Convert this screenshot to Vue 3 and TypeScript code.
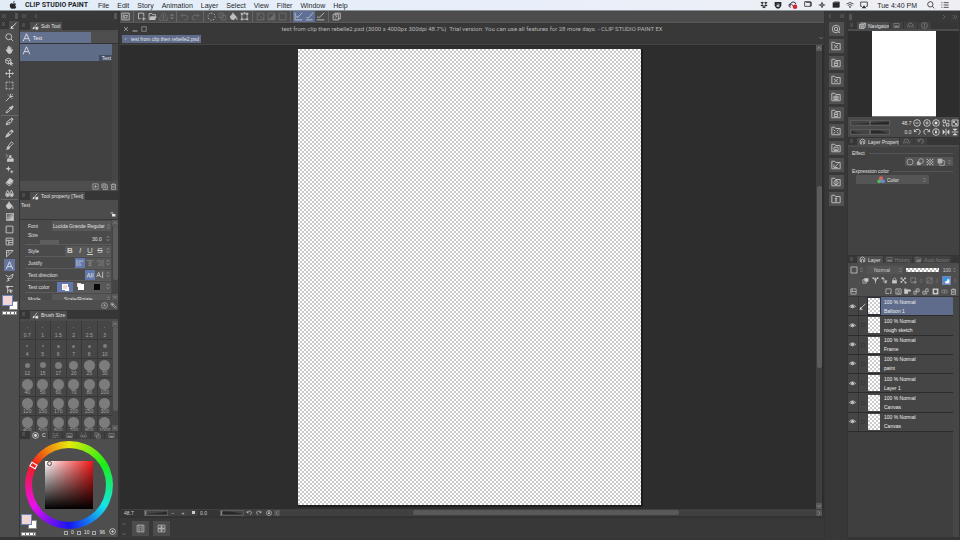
<script setup lang="ts">
import { h, ref } from 'vue'

interface Glyph { s?: string; f?: string }

const glyphs: Record<string, Glyph> = {
  search: { s: 'M9 5a4 4 0 1 1-8 0a4 4 0 1 1 8 0M8 8l3 3' },
  hand: { f: 'M3 6V3q.6-1 1 0v2l.3-3.500q.7-1 1 0V5l.5-3.500q.7-.8 1 0V5l.7-2.500q.8-.5.9.5L8.800 7l1-1.300q1-.5 1 .3L9 10l-1.500 1.500h-3L2.500 9 .8 6.500Q1 5.500 2 6z' },
  object: { s: 'M1 3.500 4.500 1.500 8 3.500v4L4.500 9.500 1 7.500zM1 3.500l3.500 2 3.500-2M4.500 5.500v4', f: 'M6.500 5.500l5 3.500-2.200.4 1 2-1 .5-1-2-1.500 1.300z' },
  move: { s: 'M6 2v8M2 6h8', f: 'M6 0l2 2.500H4zM6 12l2-2.500H4zM0 6l2.500-2v4zM12 6 9.500 4v4z' },
  marquee: { s: 'M1.500 3.500v-2h2M5 1.500h2M8.500 1.500h2v2M10.500 5v2M10.500 8.500v2h-2M7 10.500H5M3.500 10.500h-2v-2M1.500 7V5' },
  wand: { s: 'M1 11l5-5M7.500 1v2M11 4.500H9M4 2l1.300 1.300M10.500 1.500 9.500 2.500M9.500 8 9 7', f: 'M7.500 2.800l2 1.700-2 2-2-2z' },
  dropper: { s: 'M1.500 10.500 2.500 8 6 4.500 7.500 6 4 9.500z', f: 'M10 .6q1.800.4 1.300 1.900L9.500 5l.4.700-1 .9L5.300 3.300l1-1 .8.3z' },
  pen: { s: 'M1.500 10.500 3 6l4-3 2.500 2.500-3 3.500zM2 10l3-3', f: 'M7.500 2 9 .6l2.500 2.600L10 4.700zM5 6h1.500v1.500H5z' },
  pencil: { s: 'M1 11 3 6.500 7 3l2 2L5.500 9z', f: 'M7 2l2-1.500L11.500 3 10 5zM1 11l1.500-4.500L5.500 9zM5 5l2 2-1.500 1.500L3.500 6.500z' },
  brush: { s: 'M4.500 6.500 8.500 1 11 3.200 6.500 8z', f: 'M4 6.500 7 9q-1 3-6 2.500Q3 10 2.500 8z' },
  airbrush: { s: 'M5.500 6h3l2.500 2H3.500z', f: 'M3 8h8.500v3.500H2.500zM5.500 3h3v2.500h-3zM1 1.500h1.200v1.200H1zM1 4.500h1.200v1.200H1zM3 3h1.200v1.200H3z' },
  sparkle: { s: 'M9 7v4M7 9h4', f: 'M4.500 1l1 3 3 1-3 1-1 3-1-3-3-1 3-1z' },
  eraser: { s: 'M1 8l3 3h3l4-4.500', f: 'M1 7.500 6.500 1l5 3.500L6.500 10z' },
  blend: { s: 'M3.500 1.500Q6.500 6 5.500 9q-2 2.500-4.500 0Q.5 6 3.500 1.500zM8.500 1.500Q11.500 6 11 9q-2 2.500-4.500 0Q5.500 6 8.500 1.500z', f: 'M1.500 5.500h3.500v4H2zM7 5.500h3.500v4H7.500z' },
  bucket: { s: 'M4 4.500q0-4 2.500-3', f: 'M1 5.500 6 2l4.500 4.500L6 11 2.500 9.500zM10.500 6.500q1.500 3 .5 4-1.500.5-1.300-2z' },
  square: { s: 'M1.500 1.500h9v9h-9z' },
  frame: { s: 'M1.500 1.500h9v9h-9zM1.500 4.500h9M5 4.500v6M5 7.500h5.500' },
  ruler: { s: 'M2 10.500V2h9zM4 6V4h2' },
  letter: { s: 'M1.500 11 6 1l4.500 10M3.500 7.500h5' },
  balloon: { s: 'M1 2.500 4.500 5.500 11 1.500 9 7 3 7.500 6 9.500 2 11' },
  correct: { s: 'M1 2h10M3.500 2v9M3.500 6 9 10.500', f: 'M6 5l5 3-2.500.5L7 11zM2 1h3v2.500H2z' },
  clip: { s: 'M1 1.500h10v9H1zM9 4.500H6.500a1.800 1.800 0 1 0 0 3.500H8V4.500M4 3Q2 6 4 9' },
  newdoc: { s: 'M2 9V1.500h7V6M2 9h3M9 6.500v5M6.500 9h5' },
  open: { s: 'M1.500 10V2h3.500l1 1.500h4V5', f: 'M1.500 10.500 3.500 5.500h8l-2 5z' },
  save: { s: 'M1 7v4h10V7M2.500 7q0-5 3.500-5.500Q9.500 2 9.500 7M6 4v5M4.500 7.500 6 9l1.500-1.500' },
  undo: { s: 'M4 2 1.500 4.500 4 7M1.500 4.500H8q2.500.5 2.500 3T8 10.500H6' },
  redo: { s: 'M8 2l2.500 2.500L8 7M10.500 4.500H4Q1.500 5 1.500 7.500T4 10.500h2' },
  dashed: { s: 'M5 1.500h2M9 2.500l1.200 1.400M10.700 6v1.500M9.500 9.500 8 10.600M6 10.800H4.500M2.700 9.500 1.700 8M1.400 6V4.800M2.300 3 3.500 2' },
  copy: { s: 'M1.500 1.500h6v6h-6zM4.500 4.500h6v6h-6z' },
  transform: { s: 'M2.500 2.500h7v7h-7z', f: 'M1 1h2.500v2.500H1zM8.500 1H11v2.500H8.500zM1 8.500h2.500V11H1zM8.500 8.500H11V11H8.500zM5 0h2v2H5z' },
  diag: { s: 'M1.500 1.500h9v9h-9zM1.500 1.500l9 9' },
  halfdiag: { s: 'M1.500 1.500h9v9h-9z', f: 'M10.500 1.500v9h-9z' },
  snapA: { s: 'M1.500 1v9.500H11M4 8 11 1M3 5l2 3' },
  snapB: { s: 'M1 10.500h9M2 7q2 3 4.500-1T11 1' },
  snapC: { s: 'M1 10.500h10M4 7.500 11 1M3 8l-1-2' },
  help: { s: 'M1.500 3h7v7.500h-7zM4 3V1.500h7V9H8.500M3.500 5.500q1.500-1.500 3 0 0 .8-1.500 1.500v.5M5 8.500v1' },
  trash: { s: 'M1.500 3h9M4.500 3V1.500h3V3M2.500 3v8h7V3M5 5v4M7 5v4' },
  addbox: { s: 'M1.500 1.500h9v9h-9zM6 3.500v5M3.500 6h5' },
  dup: { s: 'M1.500 8.500v-7h7v2M3.500 3.500h7.500V11H3.500zM7.200 5v4.500M5 7.200h4.500' },
  lock: { s: 'M2 6V3.500q1-3 4 0V6', f: 'M4 6h7v5H4z' },
  closedlock: { s: 'M3.500 6V3.500q2.500-4 5 0V6', f: 'M2 5.500h8V11H2z' },
  clock: { s: 'M11 6a5 5 0 1 1-10 0a5 5 0 1 1 10 0M6 3v4M4 5.500 6 7.500l2-2' },
  wrench: { s: 'M4 5.500 9.500 11 11 9.500 6.500 4M1.500 2.500q2-2 4.500 0 1 3-2 4-3-1-2.500-4', f: 'M3 3h2v2H3z' },
  pal: { s: 'M11 6a5 5 0 1 1-10 0a5 5 0 1 1 10 0', f: 'M8.500 6a2.500 2.500 0 1 1-5 0a2.500 2.500 0 1 1 5 0' },
  lines: { s: 'M1 3h4M7 3h4M1 6h2M5 6h6M1 9h6M9 9h2' },
  drop3: { s: 'M3 5a2 2 0 1 0 .1 0M9 5a2 2 0 1 0 .1 0M3 1v2M9 1v2M4 8h4' },
  photo: { s: 'M1.500 2.500h9v7h-9z', f: 'M2 9l3-4 2 2 1.500-1.500L10 9z' },
  quick: { s: 'M10.500 6A4.500 4.500 0 1 1 6 1.500 4.500 4.500 0 0 1 10.500 6M8 6a2 2 0 1 1-4 0 2 2 0 1 1 4 0M7 7l4 4' },
  folderX: { s: 'M1 10.500v-9h3.500l1 1.500H11v7.500zM3.500 4.500l5 4.500M8.500 4.500l-5 4.500' },
  folderDoc: { s: 'M1 10.500v-9h3.500l1 1.500H11v7.500zM4 4.500h4V9H4zM4 6.500h4' },
  folderGrid: { s: 'M1 10.500v-9h3.500l1 1.500H11v7.500zM3.500 5h5v4h-5zM6 5v4M3.500 7h5' },
  folderPen: { s: 'M1 10.500v-9h3.500l1 1.500H11v7.500zM3.500 5.500V9H8M5 8l4-4' },
  folderArr: { s: 'M1 10.500v-9h3.500l1 1.500H11v7.500zM3 4.500l2 1.500M9 4.500 7 6M3 9l2-1.500M9 9 7 7.500' },
  folderPic: { s: 'M1 10.500v-9h3.500l1 1.500H11v7.500zM3.500 5h5v4h-5z', f: 'M4 9l1.500-2.500L8 9z' },
  folderBall: { s: 'M1 10.500v-9h3.500l1 1.500H11v7.500zM8.500 6.700a2.500 2.500 0 1 1-5 0a2.500 2.500 0 1 1 5 0M6 5v3.500' },
  folderUp: { s: 'M1 10.500v-9h3.500l1 1.500H11v7.500z', f: 'M6 4l2 2H6.800v3.500H5.200V6H4z' },
  stack: { s: 'M1 4.500 4 2h7v6L8.500 11H1zM1 4.500h7.500V11M8.500 4.500 11 2M3 6.500h3.500v2.500H3z' },
  cube: { s: 'M2 4l4-2.500L10 4v5l-2 1.500V6.500L6 5.500l-2 1V11L2 9z' },
  arcs: { s: 'M1.500 9.500V6q1.500-5 4.500-4.500T10.500 6v3.500M4 9V7.500q2-2.500 4 0V9' },
  info: { s: 'M11 6a5 5 0 1 1-10 0a5 5 0 1 1 10 0M6 3v6' },
  minus: { s: 'M11 6a5 5 0 1 1-10 0a5 5 0 1 1 10 0M3.500 6h5' },
  plus: { s: 'M11 6a5 5 0 1 1-10 0a5 5 0 1 1 10 0M3.500 6h5M6 3.500v5' },
  full: { s: 'M11 6a5 5 0 1 1-10 0a5 5 0 1 1 10 0', f: 'M4 4h4v4H4z' },
  fit: { s: 'M1.500 1.500h4v4h-4zM6.500 6.500h4v4h-4zM5.500 5.500l1 1M8 2h2.500v2.500M2 8v2.500h2.500' },
  fitdiag: { s: 'M1.500 1.500h9v9h-9zM3.500 3.500l5 5M3.500 6V3.500H6M8.500 6v2.500H6' },
  rotl: { s: 'M2 2v3.500h3.500M2 5.500Q4 1 8 2t2.500 5L8 10' },
  rotr: { s: 'M10 2v3.500H6.500M10 5.500Q8 1 4 2T1.500 7L4 10' },
  rot0: { s: 'M11 6a5 5 0 1 1-10 0a5 5 0 1 1 10 0M6 2v4', f: 'M4.500 5h3v3h-3z' },
  fliph: { s: 'M6 1v10', f: 'M1 2l3.500 4L1 10zM11 2 7.500 6 11 10z' },
  flipv: { s: 'M1 6h10', f: 'M2 1h8L6 4.500zM2 11h8L6 7.500z' },
  circle: { s: 'M10.500 6a4.500 4.500 0 1 1-9 0a4.500 4.500 0 1 1 9 0' },
  tone: { s: 'M11 4.500a3.500 3.500 0 1 1-7 0a3.500 3.500 0 1 1 7 0', f: 'M1 8q0-3 3-3.500 0 3.500 4 4Q7 11 4 11T1 8z' },
  dots: { f: 'M1 1h2v2H1zM5 1h2v2H5zM9 1h2v2H9zM3 3h2v2H3zM7 3h2v2H7zM1 5h2v2H1zM5 5h2v2H5zM9 5h2v2H9zM3 7h2v2H3zM7 7h2v2H7zM1 9h2v2H1zM5 9h2v2H5zM9 9h2v2H9z' },
  layercol: { s: 'M4 4h7v7H4z', f: 'M1 1h7v7H1z' },
  clipmask: { s: 'M1.500 4.500h6v6h-6z', f: 'M4 2h7v6H4z' },
  ref: { s: 'M1 2h10M6 2v9', f: 'M3 4h6L6 8zM1 1h2.500v2.500H1zM8.500 1H11v2.500H8.500z' },
  draft: { s: 'M2 2q5 0 3 4t5 4', f: 'M1 1h4v3H1zM6 6h5l-3 5z' },
  lockdots: { s: 'M2 2l8 8', f: 'M1 1h3v3H1zM7 1h3v3H7zM4 4h3v3H4zM1 7h3v3H1zM8 8h3v3H8z' },
  maskruler: { s: 'M1.500 1.500h8v8h-8z', f: 'M6 7h5v4H6z' },
  rulerx: { s: 'M1.500 1.500h9v9h-9zM1.500 10.500l9-9' },
  panes: { s: 'M1.500 1.500h9v9h-9zM1.500 6h9M4 1.500V6' },
  newlayer: { s: 'M7 9.500H1.500v-8h9V7', f: 'M8 8h1.500V6.800h1V8H12v1.200h-1.500v1.500h-1V9.200H8z' },
  newvec: { s: 'M1.500 1.500h9v9h-9zM6 6a2 2 0 1 0 .1 0M4 3l4 2' },
  newfold: { s: 'M11 6V3H5.500l-1-1.500H1V9.500h6', f: 'M1 2h3l1 1.500h6V6H7v3.500H1z' },
  transfer: { s: 'M5.500 1.500h5v5h-5zM1.500 5.500h4v5h-4zM5 7l3-3' },
  merge: { s: 'M6.500 1.500h4v5h-4zM1.500 5.500h4v5h-4zM8 8v2.500H6.500' },
  mask: { f: 'M1 1h10v10H1zM6 3.200a2.800 2.800 0 1 0 .01 0z' },
  applymask: { s: 'M1.500 3.500h5v5h-5zM5.500 3.500h5v5h-5z' },
  eye: { s: 'M.5 6q5.500-6 11 0-5.500 5-11 0z', f: 'M8.500 5.800a2.500 2.500 0 1 1-5 0a2.500 2.500 0 1 1 5 0' },
  pennib: { s: 'M2 10 11 1.500M1 11h5', f: 'M1 10.500 3 7l2 2z' },
  subtool: { s: 'M2 10 9 1M6 10.500h4V6', f: 'M1 11l1-4.500L5 9zM6 7h4v3.500H6z' },
  film: { s: 'M1.500 1.500h9v9h-9zM4 1.500v9M8 1.500v9M5.500 4.500h1M5.500 7.500h1' },
  mesh: { s: 'M1.500 1.500h9v9h-9zM6 1.500v9M1.500 6h9M8.500 6a2.500 2.500 0 1 1-5 0a2.500 2.500 0 1 1 5 0' },
  jl: { s: 'M1.500 1v10M3.500 3H11M3.500 6H7M3.500 9h5' },
  jc: { s: 'M1 2.500h10M3 6h6M6 2.500V11M3 9.500h6' },
  jr: { s: 'M10.500 1v10M1 3h7.500M5 6h3.500M3 9h5.500' },
  horiz: { s: 'M1.500 10 4 3l2.500 7M2.500 7.500H6M8 3v7M10.500 3v7' },
  vert: { s: 'M1 9l3-7 3 7M2 7h4M10 1v9M8.500 8.500 10 10.500' },
  spin: { s: 'M3.500 4.500 6 1.500 8.500 4.500M3.500 7.500 6 10.500 8.500 7.500' },
  up: { s: 'M2.500 8 6 4l3.500 4' },
  down: { s: 'M2.500 4 6 8l3.500-4' },
  left: { s: 'M8 2 4 6l4 4' },
  right: { s: 'M4 2l4 4-4 4' },
  dleft: { s: 'M6 2 2 6l4 4M10.500 2l-4 4 4 4' },
  dright: { s: 'M6 2l4 4-4 4M1.500 2l4 4-4 4' },
  dropbox: { f: 'M3.300 1 6 2.800 3.300 4.600.6 2.800zM8.700 1l2.700 1.800-2.700 1.800L6 2.800zM3.300 4.800 6 6.600 3.300 8.400.6 6.600zM8.700 4.800l2.700 1.800-2.700 1.800L6 6.600zM6 7.400l2.700 1.800L6 11 3.300 9.200z' },
  shield: { f: 'M1 1.500h10V7q-1.500 4-5 4.500Q2.500 11 1 7zM4 4v1h3v1H4v2.500h4v-1H5.200V7H8V4z' },
  display: { s: 'M3 2h8v5.500H9M1 1h8.500v7H1z' },
  diamond: { s: 'M1 6h10M4 6l2-4 2 4-2 4z' },
  card: { f: 'M1 2h9.500v8H1z', s: 'M3 1.500h8v8' },
  wifi: { s: 'M.8 4.500q5.200-4.500 10.400 0M2.700 6.700q3.300-2.800 6.600 0', f: 'M4.200 8.500Q6 7 7.800 8.500L6 10.500z' },
  airplay: { s: 'M3 8H1V1.500h10V8H9', f: 'M6 6.500 9.500 11h-7z' },
  list: { s: 'M4 2.500h7.500M4 6h7.500M4 9.500h7.500M.5 2.500H2M.5 6H2M.5 9.500H2' },
  apple: { f: 'M8.400 3.200c1 0 1.700.5 2.200 1.200-1.800 1.200-1.500 3.600.4 4.400-.6 1.600-1.500 3-2.600 3-.8 0-1.200-.4-2.100-.4s-1.300.4-2 .4C2.800 11.800 1.200 9.200 1.200 6.800c0-2.400 1.400-3.600 2.800-3.600.9 0 1.600.5 2.200.5s1.300-.5 2.200-.5zM6.200 3c0-1.600 1-2.700 2.300-2.900.1 1.600-1 2.800-2.300 2.900z' },
}

const Ico = (p: { n: string }) =>
  h('svg', { viewBox: '0 0 12 12', 'aria-hidden': 'true' }, [
    glyphs[p.n].f ? h('path', { d: glyphs[p.n].f, fill: 'currentColor', 'fill-rule': 'evenodd' }) : null,
    glyphs[p.n].s ? h('path', { d: glyphs[p.n].s, fill: 'none', stroke: 'currentColor', 'stroke-width': 1.2 }) : null,
  ])

const menus = ['File', 'Edit', 'Story', 'Animation', 'Layer', 'Select', 'View', 'Filter', 'Window', 'Help']
const toolGroups = [
  ['search', 'hand', 'object', 'move', 'marquee', 'wand', 'dropper'],
  ['pen', 'pencil', 'brush', 'airbrush', 'sparkle', 'eraser', 'blend'],
  ['bucket', 'gradient', 'square', 'frame', 'ruler', 'letter', 'balloon', 'correct'],
]
const activeTool = ref('letter')

const commands: { n: string; cls?: string }[][] = [
  [{ n: 'clip' }],
  [{ n: 'newdoc' }, { n: 'open' }, { n: 'save', cls: 'dim' }, { n: 'spin', cls: 'slim' }],
  [{ n: 'undo', cls: 'dim' }, { n: 'redo', cls: 'dim' }],
  [{ n: 'dashed' }, { n: 'copy', cls: 'dim' }, { n: 'bucket' }, { n: 'transform' }],
  [{ n: 'diag', cls: 'dim' }, { n: 'halfdiag', cls: 'dim' }, { n: 'square', cls: 'dim' }],
  [{ n: 'snapA', cls: 'on' }, { n: 'snapB', cls: 'on' }, { n: 'snapC' }],
  [{ n: 'help' }],
]

const sizes = ['0.7', '1', '1.5', '2', '2.5', '3', '4', '5', '6', '7', '8', '10', '12', '15', '17', '20', '25', '30',
  '40', '50', '60', '70', '80', '100', '120', '150', '170', '200', '250', '300', '400', '500', '600', '700', '800', '1000']
const dot = (s: string) => Math.min(11, Math.max(1, Math.round(Number(s) * 0.43)))

const dock = ['quick', 'folderX', 'folderDoc', 'folderX', 'folderGrid', 'folderDoc', 'folderArr', 'folderPic', 'folderPen', 'folderBall', 'folderUp']
const layers = ['Balloon 1', 'rough sketch', 'Frame', 'paint', 'Layer 1', 'Canvas', 'Canvas']
const activeLayer = ref(0)
const font = ref('Lucida Grande Regular')
const size = ref('30.0')
const expression = ref('Color')
const blend = ref('Normal')
</script>

<template>
  <div class="app">
    <header class="menubar">
      <Ico n="apple" class="apple" />
      <nav class="menus">
        <button class="brand">CLIP STUDIO PAINT</button>
        <button v-for="m in menus" :key="m">{{ m }}</button>
      </nav>
      <div class="tray">
        <Ico n="dropbox" /><Ico n="shield" />
        <svg viewBox="0 0 14 12" class="cloud" aria-hidden="true">
          <path d="M3.500 9.500q-3-.5-2.500-3.500.5-2 2.500-2 1-2.500 4-2.500 3.500 0 4 3.500" fill="none" stroke="currentColor" stroke-width="1.400" />
          <path d="M4 7.500a1.500 1.500 0 1 1 1.500-2L8 8" fill="none" stroke="currentColor" stroke-width="1.200" />
          <circle cx="10" cy="8.500" r="3.400" fill="#d8232f" />
        </svg>
        <Ico n="display" /><Ico n="diamond" /><Ico n="card" /><Ico n="wifi" /><Ico n="airplay" />
        <time>Tue 4:40 PM</time>
        <Ico n="search" /><Ico n="list" />
      </div>
    </header>

    <main class="workspace">
      <section class="toolcol" aria-label="Tools">
        <div class="strip"><Ico n="dleft" /><i class="grip"></i></div>
        <div class="tabs"><i class="handle"></i><button class="tab on" aria-label="Tool"><Ico n="pennib" /></button></div>
        <div class="tools">
          <div v-for="(g, gi) in toolGroups" :key="gi" class="toolgroup">
            <button v-for="t in g" :key="t" :aria-label="t" :class="{ active: t === activeTool }" @click="activeTool = t">
              <i v-if="t === 'gradient'" class="grad"></i>
              <Ico v-else :n="t" />
            </button>
          </div>
          <div class="swatches"><button class="fg" aria-label="Main color"></button><button class="bg" aria-label="Sub color"></button></div>
          <button class="clear" aria-label="Transparent"></button>
        </div>
      </section>

      <section class="leftcol">
        <div class="strip"><Ico n="dleft" /><Ico n="left" class="second" /><i class="grip"></i></div>

        <div class="tabs"><i class="handle"></i><button class="tab on"><Ico n="subtool" />Sub Tool</button></div>
        <div class="group"><button><Ico n="letter" />Text</button></div>
        <div class="sublist">
          <button class="subitem"><Ico n="letter" /><span>Text</span></button>
          <i class="gutter"></i>
        </div>
        <div class="foot">
          <button aria-label="Import"><Ico n="addbox" /></button>
          <button aria-label="Duplicate"><Ico n="dup" /></button>
          <button aria-label="Delete"><Ico n="trash" /></button>
        </div>

        <div class="tabs"><i class="handle"></i><button class="tab on"><Ico n="subtool" />Tool property [Text]</button></div>
        <div class="prophead"><span>Text</span><button aria-label="Lock"><Ico n="lock" /></button></div>
        <div class="props">
          <div class="rows">
            <div class="row">
              <label for="font">Font</label>
              <div class="box"><select id="font" v-model="font"><option>Lucida Grande Regular</option></select><Ico n="spin" class="narrow" /></div>
            </div>
            <div class="row size">
              <label for="size">Size</label><i class="meter"></i>
              <input id="size" v-model="size" /><Ico n="spin" />
            </div>
            <div class="row">
              <span>Style</span>
              <div class="box styles">
                <button><b>B</b></button><button><em>I</em></button><button><u>U</u></button><button><s>S</s></button><Ico n="spin" />
              </div>
            </div>
            <div class="row">
              <span>Justify</span>
              <div class="box">
                <button class="on" aria-label="Left"><Ico n="jl" /></button><button class="dim" aria-label="Center"><Ico n="jc" /></button><button class="dim" aria-label="Right"><Ico n="jr" /></button><Ico n="spin" />
              </div>
            </div>
            <div class="row">
              <span>Text direction</span>
              <div class="box">
                <button class="on" aria-label="Horizontal"><Ico n="horiz" /></button><button aria-label="Vertical"><Ico n="vert" /></button><Ico n="spin" />
              </div>
            </div>
            <div class="row">
              <span>Text color</span>
              <div class="box colors">
                <button class="on" aria-label="Main color"><i class="chip pink"></i></button>
                <button aria-label="Sub color"><i class="chip white"></i></button>
                <button aria-label="User color"><i class="chip black"></i></button>
                <Ico n="spin" />
              </div>
            </div>
            <div class="row">
              <label for="mode">Mode</label>
              <div class="box mode"><select id="mode"><option>Scale/Rotate</option></select><Ico n="spin" class="narrow" /></div>
            </div>
          </div>
          <div class="scroll"><Ico n="up" /><i class="thumb long"></i><Ico n="down" /></div>
        </div>
        <div class="foot low">
          <button aria-label="Reset"><Ico n="clock" /></button>
          <button aria-label="Settings"><Ico n="wrench" /></button>
        </div>

        <div class="tabs"><i class="handle"></i><button class="tab on"><Ico n="subtool" />Brush Size</button></div>
        <div class="brushes">
          <div class="grid">
            <button v-for="s in sizes" :key="s">
              <span class="dotbox"><i :style="{ width: dot(s) + 'px', height: dot(s) + 'px' }"></i></span>
              <span class="num">{{ s }}</span>
            </button>
          </div>
          <div class="scroll"><Ico n="up" /><i class="thumb long"></i><Ico n="down" /></div>
        </div>

        <div class="tabs colortabs">
          <i class="handle"></i>
          <button class="tab on"><Ico n="pal" />C</button>
          <button class="tab" aria-label="Slider"><Ico n="lines" /></button>
          <button class="tab" aria-label="Color set"><Ico n="photo" /></button>
          <button class="tab" aria-label="Mixing"><Ico n="drop3" /></button>
          <button class="tab" aria-label="Approximate"><Ico n="copy" /></button>
          <button class="tab" aria-label="History"><Ico n="photo" /></button>
        </div>
        <div class="color">
          <div class="wheel"><div class="hole"><div class="sv"><i class="pick"></i></div></div><i class="hue"></i></div>
          <div class="colorfoot">
            <div class="mini">
              <div class="swatches"><button class="fg" aria-label="Main color"></button><button class="bg" aria-label="Sub color"></button></div>
              <button class="clear" aria-label="Transparent"></button>
            </div>
            <div class="hsv"><i></i><span>0</span><i></i><span>10</span><i></i><span>96</span></div>
            <button class="hls" aria-label="Color space"><Ico n="plus" /></button>
          </div>
        </div>
      </section>

      <section class="center">
        <div class="commands">
          <div v-for="(g, gi) in commands" :key="gi" class="cmdgroup">
            <button v-for="c in g" :key="c.n" :class="c.cls" :aria-label="c.n"><Ico :n="c.n" /></button>
          </div>
        </div>
        <div class="titlebar">
          <div class="winbtns">
            <button aria-label="Close"><svg viewBox="0 0 12 12"><path d="M2 2l8 8M10 2l-8 8" fill="none" stroke="currentColor" stroke-width="1.500" /></svg></button>
            <button aria-label="Minimize"><svg viewBox="0 0 12 12"><path d="M1 10h10" stroke="currentColor" stroke-width="2" /></svg></button>
            <button aria-label="Zoom"><Ico n="square" /></button>
          </div>
          <h1>test from clip then rebelle2.psd (3000 x 4000px 300dpi 48.7%)&nbsp; Trial version: You can use all features for 28 more days. - CLIP STUDIO PAINT EX</h1>
        </div>
        <div class="doctabs"><button><i>×</i>test from clip then rebelle2.psd</button><Ico n="down" /></div>
        <div class="stage">
          <div class="view"><div class="page"></div></div>
          <div class="scroll vs"><Ico n="up" /><i class="thumb"></i><Ico n="down" /></div>
        </div>
        <div class="status">
          <span class="val">48.7</span>
          <svg class="ramp" viewBox="0 0 36 6" preserveAspectRatio="none"><path d="M0 5 36 1v4z" fill="#282828" /><path d="M1 0v6" stroke="#8a8a8a" stroke-width="2" /></svg>
          <button aria-label="Zoom out">−</button><button aria-label="Zoom in">+</button><button aria-label="Fit"><i class="fitdot"></i></button>
          <span class="val">0.0</span>
          <svg class="ramp" viewBox="0 0 36 6" preserveAspectRatio="none"><path d="M1 5V1q22-1 34 4z" fill="#282828" /><path d="M1 0v6" stroke="#8a8a8a" stroke-width="2" /></svg>
          <button aria-label="Rotate left"><Ico n="rotl" /></button><button aria-label="Rotate right"><Ico n="rotr" /></button><button aria-label="Reset rotation"><Ico n="rot0" /></button>
          <Ico n="left" class="arrow" />
          <div class="hs"><i></i></div>
          <Ico n="right" class="arrow" />
        </div>
        <div class="bottom">
          <div class="updown"><Ico n="up" /><Ico n="down" /></div>
          <button aria-label="Timeline"><Ico n="film" /></button>
          <button aria-label="Mesh"><Ico n="mesh" /></button>
        </div>
      </section>

      <section class="dock">
        <div class="strip"><Ico n="left" /><Ico n="dright" class="second" /></div>
        <div class="docklist">
          <button v-for="(d, i) in dock" :key="i" :aria-label="'Material ' + (i + 1)"><Ico :n="d" /></button>
        </div>
      </section>

      <section class="rightcol">
        <div class="strip"><i class="grip"></i><Ico n="right" class="end" /><Ico n="dright" /></div>

        <div class="tabs">
          <i class="handle"></i><button class="tab on cut"><Ico n="stack" />Navigator</button>
          <button class="tab" aria-label="Sub view"><Ico n="photo" /></button>
          <button class="tab" aria-label="Item bank"><Ico n="arcs" /></button>
          <button class="tab" aria-label="Information"><Ico n="info" /></button>
        </div>
        <div class="navview"><div class="navpage"></div></div>
        <div class="navctl">
          <div class="navrow">
            <svg class="ramp" viewBox="0 0 40 6" preserveAspectRatio="none"><path d="M0 5 40 1v4z" fill="#282828" /><path d="M20 0v6" stroke="#8a8a8a" /></svg>
            <span>48.7</span>
            <button aria-label="Zoom out"><Ico n="minus" /></button><button aria-label="Zoom in"><Ico n="plus" /></button><button aria-label="Full size"><Ico n="full" /></button><button aria-label="Fit"><Ico n="fit" /></button><button aria-label="Fit to view"><Ico n="fitdiag" /></button>
          </div>
          <div class="navrow">
            <svg class="ramp" viewBox="0 0 40 6" preserveAspectRatio="none"><path d="M1 1Q5 5 19 5H1zM21 5V1h9l9 4z" fill="#282828" /><path d="M20 0v6" stroke="#8a8a8a" /></svg>
            <span>0.0</span>
            <button aria-label="Rotate left"><Ico n="rotl" /></button><button aria-label="Rotate right"><Ico n="rotr" /></button><button aria-label="Reset"><Ico n="rot0" /></button><button aria-label="Flip horizontal"><Ico n="fliph" /></button><button aria-label="Flip vertical"><Ico n="flipv" /></button>
          </div>
        </div>

        <div class="tabs gap">
          <i class="handle"></i><button class="tab on cut wide"><Ico n="cube" />Layer Property</button>
          <button class="tab" aria-label="Search layer"><Ico n="arcs" /></button>
          <button class="tab" aria-label="History"><Ico n="rotl" /></button>
        </div>
        <div class="layerprop">
          <div class="legend">Effect</div>
          <div class="effects">
            <button aria-label="Border"><Ico n="circle" /></button><button aria-label="Extract line"><Ico n="tone" /></button><button aria-label="Tone"><Ico n="dots" /></button><button aria-label="Layer color"><Ico n="layercol" /></button><Ico n="spin" class="thin" />
          </div>
          <label class="legend" for="expr">Expression color</label>
          <div class="expr">
            <svg viewBox="0 0 12 12" aria-hidden="true"><circle cx="6" cy="3.500" r="3" fill="#d9605c" /><circle cx="3.300" cy="8" r="3" fill="#54b861" /><circle cx="8.700" cy="8" r="3" fill="#6d87d8" /></svg>
            <select id="expr" v-model="expression"><option>Color</option></select>
            <Ico n="spin" class="thin" />
          </div>
        </div>

        <div class="tabs gap">
          <i class="handle"></i><button class="tab on"><Ico n="cube" />Layer</button>
          <button class="tab faint"><Ico n="photo" />History</button>
          <button class="tab faint"><Ico n="open" />Auto Action</button>
        </div>
        <div class="layerbar">
          <button class="palette" aria-label="Palette color"><Ico n="square" /></button><Ico n="spin" class="thin" />
          <div class="blendbox"><select v-model="blend" aria-label="Blending mode"><option>Normal</option></select><Ico n="spin" class="thin" /></div>
          <i class="opacity"></i><span>100</span><Ico n="spin" class="thin" />
        </div>
        <div class="layerbar icons">
          <button aria-label="Clip"><Ico n="clipmask" /></button><button aria-label="Reference"><Ico n="ref" /></button><button aria-label="Draft"><Ico n="draft" /></button><button aria-label="Lock"><Ico n="closedlock" /></button><button aria-label="Lock pixels"><Ico n="lockdots" /></button>
          <button class="dim" aria-label="Mask"><Ico n="maskruler" /></button><Ico n="spin" class="thin" /><button class="dim" aria-label="Ruler"><Ico n="rulerx" /></button><Ico n="spin" class="thin" />
          <button class="lc" aria-label="Layer color"><svg viewBox="0 0 12 12"><path d="M4 4h7v7H4z" fill="#fff" /><path d="M1 1h6v6H1z" fill="#1e9bf0" /></svg></button><Ico n="spin" class="thin" />
        </div>
        <div class="layerbar make">
          <button class="first" aria-label="Panes"><Ico n="panes" /></button>
          <button aria-label="New raster layer"><Ico n="newlayer" /></button><button aria-label="New vector layer"><Ico n="newvec" /></button><button aria-label="New folder"><Ico n="newfold" /></button><button aria-label="Transfer"><Ico n="transfer" /></button><button aria-label="Merge"><Ico n="merge" /></button><button aria-label="Create mask"><Ico n="mask" /></button><button class="dim" aria-label="Apply mask"><Ico n="applymask" /></button><button aria-label="Delete"><Ico n="trash" /></button>
        </div>
        <div class="layers">
          <ul>
            <li v-for="(l, i) in layers" :key="i" :class="{ sel: i === activeLayer }">
              <button class="vis" aria-label="Visibility"><Ico n="eye" /></button>
              <span class="state"><Ico v-if="i === activeLayer" n="pennib" /><i v-else></i></span>
              <button class="entry" @click="activeLayer = i">
                <i class="thumbnail"></i>
                <span class="names"><span>100 % Normal</span><span>{{ l }}</span></span>
              </button>
            </li>
          </ul>
          <i class="gutter"></i>
        </div>
      </section>
    </main>
  </div>
</template>

<style>
body { margin: 0; background: #343434; }
</style>

<style scoped>
.app {
  min-height: 100vh; display: flex; flex-direction: column; overflow: hidden;
  background: #343434; color: #e0e0e0;
  font: 5px/6px "Liberation Sans", Arial, sans-serif;
}
.app *, .app { box-sizing: border-box; }
button, select, input { all: unset; box-sizing: border-box; display: flex; align-items: center; cursor: default; }
svg { display: block; width: 8px; height: 8px; flex: none; }
i { font-style: normal; flex: none; }

.menubar {
  height: 11px; display: flex; align-items: center; padding: 0 11px 0 9px;
  background: linear-gradient(90deg, #e2ecf7, #e8effa 50%, #efeff3); color: #26282c;
  border-bottom: 1px solid #8a9197; font-size: 7px; line-height: 9px;
}
.apple { margin-right: 8px; }
.menus { display: flex; gap: 8px; flex: 1; }
.brand { font-family: Roboto, "Liberation Sans", sans-serif; font-weight: 700; margin-right: 2px; }
.tray { display: flex; align-items: center; gap: 6px; }
.cloud { width: 10px; }
.tray time { margin: 0 4px 0 3px; }

.workspace { flex: 1; display: grid; grid-template-columns: 19px 98px minmax(0, 1fr) 22px 112px; column-gap: 1px; padding-bottom: 3px; }
.toolcol, .leftcol, .center, .dock, .rightcol { display: flex; flex-direction: column; min-width: 0; }

.strip { height: 10px; display: flex; align-items: center; background: #383838; color: #787878; padding: 0 2px; }
.strip svg { width: 6px; height: 6px; }
.strip .second { margin-left: 6px; }
.grip { width: 3px; height: 6px; background: #555; margin-left: auto; }
.tabs { height: 11px; display: flex; align-items: flex-end; gap: 1px; background: #363636; border-bottom: 2px solid #4c4c4c; }
.handle { width: 3px; height: 4px; background: #4c4c4c; margin: 0 4px 3px 2px; }
.tab { height: 8px; gap: 2px; padding: 0 2px; color: #888; background: #404040; white-space: nowrap; overflow: hidden; }
.tab.on { background: #4c4c4c; color: #e0e0e0; }
.tab svg { width: 7px; height: 7px; }
.gap { margin-top: 1px; }

.toolcol .strip { padding: 0 1px; }
.toolcol .tabs { height: 10px; }
.toolcol .tabs .handle { margin-right: 3px; }
.toolcol .tab { padding: 0 1px; flex: 1; color: #fff; }
.tools { flex: 1; background: #4e4e4e; display: flex; flex-direction: column; align-items: stretch; }
.toolgroup { display: flex; flex-direction: column; margin: 0 1px; }
.toolgroup + .toolgroup { border-top: 1px solid #6a6a6a; }
.toolgroup button { height: 12px; justify-content: center; color: #c8c8c8; }
.toolgroup + .toolgroup button:first-child { height: 11px; }
.toolgroup svg { width: 9px; height: 9px; }
.toolgroup .active { background: #64749c; margin: 0 3px; color: #e8e8ee; }
.grad { width: 8px; height: 8px; border: 1px solid #aaa; background: linear-gradient(135deg, #555, #ddd); }
.swatches { display: grid; width: 16px; height: 16px; grid-template: repeat(16, 1fr) / repeat(16, 1fr); margin: 0 auto; }
.fg { grid-area: 1 / 1 / 12 / 12; background: #f2d5d6; border: 1px solid #6c82ba; z-index: 1; }
.bg { grid-area: 7 / 8 / 16 / 17; background: #fff; border: 1px solid #888; }
.clear { height: 4px; width: 15px; margin: 0 auto; border: 1px solid #888; background: repeating-linear-gradient(90deg, #fff 0 3px, #666 3px 4px); }

.leftcol .strip { padding: 0 1px; }
.group { height: 12px; background: #4e4e4e; border-bottom: 1px solid #333; display: flex; }
.group button { width: 72%; background: #65728f; gap: 2px; padding-left: 2px; color: #f0f0f0; }
.group svg, .subitem svg { width: 9px; height: 9px; color: #e0e0e6; }
.sublist { flex: 1; background: #414141; display: flex; align-items: flex-start; min-height: 30px; }
.subitem { flex: 1; height: 17px; background: #5f6c87; align-items: flex-start; justify-content: space-between; padding: 2px 0 0 2px; }
.subitem span { align-self: flex-end; background: #444c60; padding: 0 1px 0 3px; color: #eee; }
.gutter { width: 6px; align-self: stretch; background: #464646; }
.foot { height: 10px; display: flex; justify-content: flex-end; align-items: center; gap: 2px; padding-right: 1px; background: #4e4e4e; color: #b8b8b8; }
.foot svg { width: 7px; height: 7px; }
.prophead { height: 18px; background: #4c4c4c; display: flex; justify-content: space-between; padding: 0 2px 2px 1px; border-bottom: 1px solid #383838; }
.prophead button { align-self: flex-end; }
.prophead svg { width: 6px; height: 6px; }
.props { height: 80px; display: flex; background: #4a4a4a; overflow: hidden; }
.rows { flex: 1; min-width: 0; padding: 0 1px 0 5px; }
.row { height: 12px; display: flex; align-items: center; justify-content: space-between; border-bottom: 1px solid #5c5c5c; padding-left: 3px; }
.row:first-child { height: 13px; border-color: transparent; }
.row > svg, .box > svg { width: 6px; height: 9px; color: #aaa; }
.box > .narrow { width: 5px; }
.box { display: flex; align-items: center; height: 10px; background: #585858; }
.box select { padding-left: 1px; width: 54px; white-space: nowrap; }
.mode select { padding-left: 12px; }
.size { justify-content: flex-start; }
.size label { align-self: flex-start; width: 12px; line-height: 5px; }
.size input { width: 13px; margin-left: auto; }
.meter { width: 19px; height: 4px; background: #5e5e5e; align-self: flex-end; }
.box button { height: 10px; width: 10px; justify-content: center; color: #d0d0d0; }
.box .dim { color: #888; }
.box .on { background: #6379ad; }
.styles { font-size: 8px; line-height: 10px; }
.colors button { width: 16px; }
.chip { width: 6px; height: 6px; border: 1px solid #fff; }
.pink { background: #f2d5d6; box-shadow: 2px 2px 0 -1px #fff; }
.white { background: #fff; box-shadow: -2px -2px 0 -1px #f2d5d6; }
.black { background: #080808; border-color: #080808; }
.scroll { width: 6px; display: flex; flex-direction: column; align-items: center; background: #454545; color: #999; }
.scroll svg { width: 6px; height: 6px; background: #595959; }
.thumb { width: 5px; border-radius: 2px; background: #5c5c5c; }
.thumb.long { flex: 1; margin-bottom: 14px; }

.brushes { height: 110px; display: flex; overflow: hidden; background: #383838; }
.grid { flex: 1; display: grid; grid-template-columns: repeat(6, 1fr); grid-auto-rows: 18px; gap: 1px; }
.grid button { background: #464646; flex-direction: column; color: #a6a6a6; }
.dotbox { height: 12px; display: flex; align-items: center; }
.dotbox i { border-radius: 50%; background: #7c7c7c; }
.num { line-height: 5px; }

.colortabs { height: 9px; border-bottom-width: 1px; }
.colortabs .tab { width: 13px; height: 8px; justify-content: center; }
.colortabs .tab.on { width: auto; gap: 3px; }
.color { background: #4e4e4e; padding: 1px 5px; display: flex; flex-direction: column; align-items: center; }
.wheel {
  position: relative; width: 88px; height: 88px; border-radius: 50%; display: flex; align-items: center; justify-content: center;
  background: conic-gradient(#e6e80c, #18ee18 60deg, #16e4e8 120deg, #1616f0 180deg, #ea10ea 240deg, #f01c1c 300deg, #f08a10 330deg, #e6e80c);
}
.hole { width: 74px; height: 74px; border-radius: 50%; background: #4e4e4e; display: flex; align-items: center; justify-content: center; }
.sv { position: relative; width: 48px; height: 48px; background: linear-gradient(0deg, #000, transparent), linear-gradient(90deg, #fff, #f31616); }
.pick { position: absolute; left: 2px; top: 0; width: 5px; height: 5px; border: 1px solid #555; border-radius: 50%; }
.hue { position: absolute; left: 5px; top: 22px; width: 7px; height: 5px; border: 1px solid #fff; transform: rotate(30deg); background: #e22; }
.colorfoot { align-self: stretch; display: flex; align-items: flex-end; margin: -15px -5px 0; z-index: 1; }
.mini { width: 17px; }
.mini .clear { margin: 2px auto 0; }
.hsv { flex: 1; display: flex; align-items: center; justify-content: flex-end; gap: 3px; padding-bottom: 1px; }
.hsv i { width: 4px; height: 4px; border: 1px solid #aaa; }
.hsv span { line-height: 5px; }
.hls { margin: 0 2px 1px 4px; }
.hls svg { width: 7px; height: 7px; }

.center { margin-left: 1px; }
.commands { height: 12px; display: flex; background: #4c4c4c; border-bottom: 1px solid #5a5a5a; }
.cmdgroup { display: flex; }
.cmdgroup + .cmdgroup { margin-left: 2px; border-left: 1px solid #666; padding-left: 2px; }
.cmdgroup button { width: 11px; justify-content: center; color: #c0c0c0; }
.cmdgroup svg { width: 9px; height: 9px; }
.cmdgroup .dim { color: #6c6c6c; }
.cmdgroup .slim { width: 5px; }
.cmdgroup .slim svg { width: 6px; }
.cmdgroup .on { background: #5f7098; }
.titlebar { height: 11px; margin-top: 1px; padding-bottom: 1px; display: grid; grid-template-columns: 1fr auto 1fr; align-items: center; background: #383838; }
.titlebar h1 { margin: 0; font: 400 6px/8px Roboto, "Liberation Sans", sans-serif; color: #b4b4b4; }
.winbtns { display: flex; gap: 3px; padding-left: 3px; color: #b0b0b0; }
.winbtns svg { width: 6px; height: 6px; }
.doctabs { height: 9px; display: flex; justify-content: space-between; padding: 0 0 1px 2px; background: #383838; color: #888; }
.doctabs svg { width: 6px; height: 6px; }
.doctabs button { background: #5f6c8b; gap: 4px; padding: 0 2px; color: #e4e4e4; }
.doctabs i { color: #aab; }
.stage { flex: 1; display: flex; background: #2d2d2d; border-top: 1px solid #444; min-height: 0; }
.view { flex: 1; display: flex; justify-content: center; padding: 4px 0 4px 3px; }
.page { width: 49.5%; background: conic-gradient(#cacaca 25%, #fdfdfd 0 50%, #cacaca 0 75%, #fdfdfd 0) 0 0 / 4px 4px; box-shadow: 1px 1px 0 1px #1e1e1e; }
.vs { margin-right: 2px; justify-content: space-between; background: #3e3e3e; }
.vs .thumb { flex: 0 1 182px; }
.status { height: 7px; display: flex; align-items: center; background: #404040; margin: 0 2px; color: #d0d0d0; }
.status .val { width: 22px; padding-left: 2px; background: #353535; }
.ramp { width: 32px; height: 6px; border: 1px solid #5a5a5a; background: #444; }
.status .ramp { flex: 0 0 24px; }
.status button { width: 10px; justify-content: center; }
.status svg:not(.ramp) { width: 6px; height: 6px; }
.fitdot { width: 3px; height: 3px; background: #ccc; }
.status .arrow { background: #555; color: #999; }
.hs { flex: 1; display: flex; height: 5px; padding-left: 19%; }
.hs i { width: 66%; background: #595959; border-radius: 2px; }
.bottom { height: 22px; margin-top: 1px; margin-bottom: -2px; display: flex; align-items: center; gap: 4px; background: #383838; color: #b0b0b0; border-top: 1px solid #303030; }
.bottom button { width: 17px; height: 15px; background: #4c4c4c; justify-content: center; }
.bottom button svg { width: 9px; height: 9px; }
.updown { display: flex; flex-direction: column; gap: 4px; color: #777; padding: 0 1px; }
.updown svg { width: 6px; height: 6px; }

.dock { background: #383838; margin-bottom: -3px; }
.docklist { display: grid; grid-auto-rows: 14px; gap: 3px; justify-content: center; margin-top: 1px; }
.docklist button { width: 15px; background: #505050; justify-content: center; color: #b8b8b8; }
.docklist svg { width: 10px; height: 10px; }

.rightcol { padding-right: 1px; }
.rightcol .strip { height: 11px; padding: 0 1px; }
.rightcol .strip .grip { margin-left: 0; }
.rightcol .strip .end { margin-left: auto; margin-right: 5px; }
.rightcol .tabs { height: 9px; }
.rightcol .handle { margin-right: 3px; margin-bottom: 2px; }
.rightcol .tab { height: 7px; min-width: 13px; justify-content: center; }
.rightcol .cut { width: 32px; justify-content: flex-start; }
.rightcol .cut.wide { width: 42px; }
.rightcol .tab.faint { color: #7c7c7c; }
.navview { height: 86px; background: #2d2d2d; display: flex; justify-content: center; }
.navpage { width: 64px; background: #fff; border-bottom: 1px solid #777; }
.navctl { background: #4a4a4a; height: 20px; padding: 1px 0 1px 2px; }
.navrow { height: 9px; display: flex; align-items: center; justify-content: space-between; }
.navctl .ramp { width: 40px; }
.navrow span { width: 20px; text-align: right; }
.layerprop { height: 108px; background: #424242; padding: 3px 6px 0 4px; }
.legend { display: flex; align-items: center; gap: 4px; line-height: 6px; }
.legend::after { content: ""; flex: 1; height: 1px; background: #555; }
.effects { display: flex; align-items: center; justify-content: space-around; width: 48px; height: 9px; margin: 1px 0 2px auto; background: #555; color: #b0b0b0; }
.thin { width: 5px; color: #aaa; }
.expr { width: 73px; height: 9px; margin: 1px 0 0 4px; display: flex; align-items: center; background: #555; border-radius: 1px; padding: 0 2px 0 21px; gap: 2px; }
.expr select { flex: 1; }
.layerbar { height: 10px; display: flex; align-items: center; background: #4e4e4e; color: #c8c8c8; gap: 1px; padding: 0 2px; }
.layerbar .dim { color: #888; }
.blendbox { display: flex; width: 36px; background: #555; align-items: center; margin: 0 2px; }
.blendbox select { flex: 1; padding-left: 7px; }
.opacity { flex: 1; height: 4px; background: conic-gradient(#bbb 25%, #fff 0 50%, #bbb 0 75%, #fff 0) 0 0 / 4px 4px; margin-right: 3px; }
.icons { height: 11px; justify-content: space-between; padding-left: 14px; }
.icons > svg { width: 4px; }
.icons button svg, .make svg { width: 7px; height: 7px; }
.lc { background: #6b85b8; padding: 0 1px; height: 9px; }
.make { height: 11px; justify-content: space-between; border-bottom: 1px solid #383838; }
.make .first { margin-right: 26px; }
.layers { flex: 1; display: flex; background: #3f3f3f; }
.layers ul { flex: 1; margin: 0; padding: 0; list-style: none; align-self: flex-start; display: grid; grid-template-rows: repeat(7, 1fr); height: 135px; }
.layers li { display: grid; grid-template-columns: 9px 8px 1fr; gap: 1px; border-bottom: 1px solid #2c2c2c; background: #454545; }
.vis, .state { display: flex; align-items: center; justify-content: center; color: #c8c8c8; }
.state { border-left: 1px solid #363636; color: #eee; }
.state i { width: 4px; height: 4px; border: 1px solid #3a3a3a; }
.vis svg, .state svg { width: 7px; height: 7px; }
.entry { gap: 4px; padding-left: 1px; }
.sel .entry { background: #5f6c8b; }
.thumbnail { width: 12px; height: 16px; background: conic-gradient(#ccc 25%, #fff 0 50%, #ccc 0 75%, #fff 0) 0 0 / 4px 4px; }
.sel .thumbnail { outline: 1px solid #2b2f3a; }
.names { display: flex; flex-direction: column; gap: 3px; color: #f0f0f0; }
</style>
